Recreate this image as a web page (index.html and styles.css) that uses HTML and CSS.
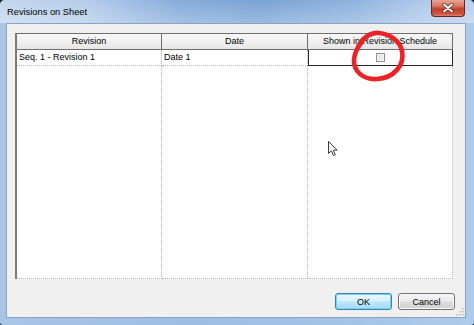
FILE: index.html
```html
<!DOCTYPE html>
<html>
<head>
<meta charset="utf-8">
<title>Revisions on Sheet</title>
<link rel="stylesheet" href="styles.css">
</head>
<body>
<div class="window">
  <div class="titlebar">
    <span class="title">Revisions on Sheet</span>
    <div class="close">
      <svg width="12" height="10" viewBox="0 0 12 10">
        <path d="M2 1.5 L10 8.5 M10 1.5 L2 8.5" stroke="#5a1d1d" stroke-width="3.4" stroke-linecap="round"/>
        <path d="M2 1.5 L10 8.5 M10 1.5 L2 8.5" stroke="#ffffff" stroke-width="2" stroke-linecap="round"/>
      </svg>
    </div>
  </div>
  <div class="frame">
    <div class="client">
      <div class="grid">
        <div class="hcell">Revision</div>
        <div class="hcell">Date</div>
        <div class="hcell">Shown in Revision Schedule</div>
        <div class="cell">Seq. 1 - Revision 1</div>
        <div class="cell">Date 1</div>
        <div class="cell focus"><span class="checkbox"></span></div>
        <div class="fill"></div>
        <div class="fill"></div>
        <div class="fill"></div>
      </div>
      <div class="buttons">
        <button class="btn default">OK</button>
        <button class="btn">Cancel</button>
      </div>
      <svg class="grip" width="8" height="8" viewBox="0 0 8 8">
        <rect x="6" y="0" width="1.5" height="1.5" fill="#b8b8b8"/>
        <rect x="3" y="3" width="1.5" height="1.5" fill="#b8b8b8"/>
        <rect x="6" y="3" width="1.5" height="1.5" fill="#b8b8b8"/>
        <rect x="0" y="6" width="1.5" height="1.5" fill="#b8b8b8"/>
        <rect x="3" y="6" width="1.5" height="1.5" fill="#b8b8b8"/>
        <rect x="6" y="6" width="1.5" height="1.5" fill="#b8b8b8"/>
      </svg>
    </div>
  </div>
  <svg class="annot" width="474" height="325" viewBox="0 0 474 325">
    <path d="M358 47 C 362 38, 371 32, 379 33 C 390 34, 400 41, 402 51 C 405 65, 394 78, 377 79 C 363 80, 353 71, 354 59 C 355 52, 357 48, 361 43" fill="none" stroke="#ec2326" stroke-width="4.6" stroke-linecap="round"/>
  </svg>
  <svg class="cursor" width="11" height="17" viewBox="0 0 11 17">
    <path d="M0.5 0.5 L0.5 12.5 L3.4 9.8 L5.4 14.6 L7.3 13.8 L5.3 9.1 L9.2 9.1 Z" fill="#ffffff" stroke="#3a3a3a" stroke-width="1" stroke-linejoin="round"/>
  </svg>
</div>
</body>
</html>
```

FILE: styles.css
```css
html, body {
  margin: 0;
  padding: 0;
  background: #1e2430;
}

.window {
  position: relative;
  width: 474px;
  height: 325px;
  box-sizing: border-box;
  display: flex;
  flex-direction: column;
  border-radius: 5px 5px 3px 3px;
  overflow: hidden;
  background: linear-gradient(to right, #a9c5e6 0%, #9dbde3 40%, #a3c2e6 70%, #aecbea 100%);
  font-family: "Liberation Sans", Arial, sans-serif;
  font-size: 9px;
  color: #000;
}

.titlebar {
  height: 23px;
  flex: none;
  display: flex;
  align-items: flex-start;
  justify-content: space-between;
  padding: 0 9px 0 7px;
  box-sizing: border-box;
  background:
    linear-gradient(to bottom, rgba(255,255,255,0) 0%, rgba(255,255,255,0.25) 100%),
    linear-gradient(to right, #c3d6ec 0%, #b4cdea 18%, #86acdb 38%, #7aa3d6 55%, #8fb3de 75%, #afcaea 90%, #b8d0ec 100%);
}

.title {
  font-size: 9.3px;
  line-height: 23px;
  padding-top: 1px;
  color: #000;
}

.close {
  width: 34px;
  height: 17px;
  box-sizing: border-box;
  border: 1px solid #6b2424;
  border-top: none;
  border-radius: 0 0 4px 4px;
  background: linear-gradient(to bottom, #e8a593 0%, #d5745f 40%, #c4402b 55%, #cf5440 85%, #e07e68 100%);
  display: flex;
  align-items: center;
  justify-content: center;
}

.frame {
  flex: 1;
  display: flex;
  padding: 0 8px 7px 6px;
}

.client {
  position: relative;
  flex: 1;
  box-sizing: border-box;
  border: 1px solid #8aa3c2;
  background: #f0f0f0;
  padding: 9px 10px 0 8px;
  display: flex;
  flex-direction: column;
}

.grid {
  width: 438px;
  height: 246px;
  box-sizing: border-box;
  display: grid;
  grid-template-columns: 145px 146px 1fr;
  grid-template-rows: 16px 16px 1fr;
  background: #fff;
  border-top: 1px solid #6e6e6e;
  border-left: 2px solid #7a7a7a;
}

.hcell {
  background: linear-gradient(to bottom, #f8f8f8 0%, #efefef 60%, #e6e6e6 100%);
  border-right: 1px solid #6e6e6e;
  border-bottom: 1px solid #6e6e6e;
  text-align: center;
  line-height: 15px;
  white-space: nowrap;
  overflow: hidden;
}

.cell {
  border-right: 1px dotted #b4b4b4;
  border-bottom: 1px dotted #b4b4b4;
  line-height: 15px;
  padding-left: 2px;
  white-space: nowrap;
  overflow: hidden;
}

.cell.focus {
  border: 1px solid #262626;
  border-top: none;
  padding: 0;
  display: flex;
  align-items: center;
  justify-content: center;
}

.checkbox {
  display: block;
  width: 9px;
  height: 9px;
  box-sizing: border-box;
  border: 1px solid #8e8f8f;
  background: linear-gradient(135deg, #dcdcdc 0%, #f4f4f4 100%);
  box-shadow: inset 0 0 0 1px #f6f6f6;
}

.fill {
  border-right: 1px dotted #b4b4b4;
  border-bottom: 1px dotted #b4b4b4;
}

.buttons {
  display: flex;
  justify-content: flex-end;
  gap: 6px;
  margin-top: 14px;
  margin-right: 0;
}

.btn {
  width: 57px;
  height: 17px;
  box-sizing: border-box;
  margin: 0;
  padding: 0;
  font-family: "Liberation Sans", Arial, sans-serif;
  font-size: 9px;
  color: #000;
  border: 1px solid #707070;
  border-radius: 3px;
  background: linear-gradient(to bottom, #f4f4f4 0%, #ebebeb 48%, #dcdcdc 52%, #d0d0d0 100%);
  box-shadow: inset 0 0 0 1px #fbfbfb;
}

.btn.default {
  border-color: #3c7fb1;
  background: linear-gradient(to bottom, #eaf6fd 0%, #d9f0fc 48%, #bee6fd 52%, #a7d9f5 100%);
  box-shadow: inset 0 0 0 1px #6fd6f8;
}

.grip {
  position: absolute;
  right: 1px;
  bottom: 1px;
}

.annot {
  position: absolute;
  left: 0;
  top: 0;
  pointer-events: none;
}

.cursor {
  position: absolute;
  left: 328px;
  top: 141px;
  pointer-events: none;
}
```
